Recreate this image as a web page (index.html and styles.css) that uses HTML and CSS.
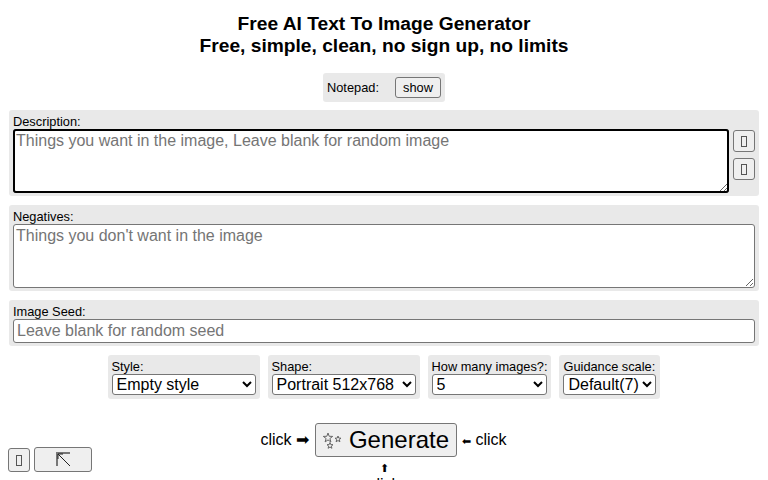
FILE: index.html
```html
<!DOCTYPE html>
<html lang="en">
<head>
    <meta charset="UTF-8">
    <meta name="viewport" content="width=device-width, initial-scale=1.0">
    <title>Free AI Text To Image Generator</title>
    <link rel="stylesheet" href="styles.css">
</head>
<body>
    <h1 class="title">Free AI Text To Image Generator<br>Free, simple, clean, no sign up, no limits</h1>

    <div class="notepad-row">
        <div class="panel notepad">
            <span>Notepad:</span>
            <button class="show-btn">show</button>
        </div>
    </div>

    <div class="panel field with-side">
        <div class="field-main">
            <label>Description:</label>
            <textarea class="text-box focused" placeholder="Things you want in the image, Leave blank for random image"></textarea>
        </div>
        <div class="side-btns">
            <button class="icon-btn"><span class="tofu"></span></button>
            <button class="icon-btn"><span class="tofu"></span></button>
        </div>
    </div>

    <div class="panel field">
        <label>Negatives:</label>
        <textarea class="text-box" placeholder="Things you don't want in the image"></textarea>
    </div>

    <div class="panel field">
        <label>Image Seed:</label>
        <input class="seed" type="text" placeholder="Leave blank for random seed">
    </div>

    <div class="options">
        <div class="panel option">
            <label>Style:</label>
            <select class="style-select"><option>Empty style</option></select>
        </div>
        <div class="panel option">
            <label>Shape:</label>
            <select class="shape-select"><option>Portrait 512x768</option></select>
        </div>
        <div class="panel option">
            <label>How many images?:</label>
            <select class="count-select"><option>5</option></select>
        </div>
        <div class="panel option">
            <label>Guidance scale:</label>
            <select class="guidance-select"><option>Default(7)</option></select>
        </div>
    </div>

    <div class="generate-row">
        <span class="hint">click &#x27A1;</span>
        <button class="generate">
            <svg class="stars" width="20" height="20" viewBox="0 0 20 20">
                <polygon points="5,3 6.2,6.3 9.7,6.4 6.9,8.5 7.9,11.9 5,9.9 2.1,11.9 3.1,8.5 0.3,6.4 3.8,6.3"/>
                <polygon points="15,6 15.8,8.1 18,8.2 16.3,9.6 16.9,11.8 15,10.5 13.1,11.8 13.7,9.6 12,8.2 14.2,8.1"/>
                <polygon points="7,12.5 7.8,14.6 10,14.7 8.3,16.1 8.9,18.3 7,17 5.1,18.3 5.7,16.1 4,14.7 6.2,14.6"/>
            </svg>
            Generate
        </button>
        <span class="hint hint-right"><span class="small-arrow">&#x2B05;</span> click</span>
    </div>
    <div class="below-hint">
        <div class="small-arrow">&#x2B06;</div>
        <div>click</div>
    </div>

    <!-- corner buttons -->
    <div class="corner-btns">
        <button class="icon-btn corner-small"><span class="tofu"></span></button>
        <button class="icon-btn corner-wide">
            <svg width="15" height="15" viewBox="0 0 15 15">
                <path class="corner-line" d="M1 14V1H14"/>
                <path class="corner-arrow" d="M2 2L14 14M2 2V7M2 2H7"/>
            </svg>
        </button>
    </div>
</body>
</html>
```

FILE: styles.css
```css
html, body { height: 480px; overflow: hidden; }
body { font-family: "Liberation Sans", Arial, sans-serif; margin: 8px; font-size: 12.8px; color: #000; position: relative; }
.title { font-size: 19.2px; line-height: 22px; margin: 5px 0 16px; text-align: center; font-weight: bold; }
.panel { background: #e9e9e9; border-radius: 3px; }

.notepad-row { display: flex; justify-content: center; margin-bottom: 8px; }
.notepad { display: flex; align-items: center; justify-content: space-between; padding: 4px; width: 122px; height: 29px; box-sizing: border-box; }
.show-btn { font: 12.8px "Liberation Sans", Arial, sans-serif; padding: 0; width: 46px; height: 21px; background: #efefef; border: 1px solid #767676; border-radius: 3px; }

.field { margin: 0 0 9px 1px; padding: 4px 4px 3px; width: 742px; }
.field label, .option label { display: block; line-height: 15px; }
.with-side { display: flex; }
.field-main { flex: 1; }
.side-btns { display: flex; flex-direction: column; gap: 6px; margin: 16px 0 0 4px; }

.text-box { display: block; box-sizing: border-box; width: 100%; height: 64px; margin: 0; padding: 2px; font: 16px "Liberation Sans", Arial, sans-serif; border: 1px solid #767676; border-radius: 3px; background: #fff; }
.with-side .text-box { width: 716px; }
.focused { outline: 2px solid #000; outline-offset: -2px; border-radius: 3px; }
.seed { display: block; box-sizing: border-box; width: 100%; height: 24px; margin: 0; padding: 1px 3px; font: 16px "Liberation Sans", Arial, sans-serif; border: 1px solid #767676; border-radius: 3px; background: #fff; }

.icon-btn { display: flex; align-items: center; justify-content: center; width: 22px; height: 22px; padding: 0; background: #efefef; border: 1px solid #767676; border-radius: 3px; }
.tofu { display: block; box-sizing: border-box; width: 6px; height: 11px; border: 1px solid #555; }

.options { display: flex; justify-content: center; gap: 8px; }
.option { padding: 4px; height: 44px; box-sizing: border-box; }
.option select { display: block; height: 21px; font: 16px "Liberation Sans", Arial, sans-serif; background: #fff; border: 1px solid #767676; border-radius: 3px; padding: 0; }
.style-select { width: 144px; }
.shape-select { width: 144px; }
.count-select { width: 115px; }
.guidance-select { width: 93px; }

.generate-row { display: flex; justify-content: center; align-items: center; gap: 6px; margin-top: 24px; font-size: 16px; height: 34px; }
.hint { line-height: 18px; height: 18px; margin-top: -1px; }
.hint-right { margin-left: -1px; margin-right: 1px; }
.generate { display: flex; align-items: center; gap: 6px; height: 34px; padding: 0 7px; font: 24px "Liberation Sans", Arial, sans-serif; background: #efefef; border: 1px solid #767676; border-radius: 3px; color: #000; }
.stars polygon { fill: none; stroke: #666; stroke-width: 1; }
.small-arrow { font-size: 11px; }
.below-hint { text-align: center; font-size: 16px; line-height: 18px; margin-top: 4px; }
.below-hint .small-arrow { line-height: 15px; }

.corner-btns { position: absolute; left: 0; top: 439px; display: flex; align-items: flex-end; gap: 4px; }
.corner-small { height: 24px; }
.corner-wide { width: 58px; height: 25px; }
.corner-line { fill: none; stroke: #777; stroke-width: 2; }
.corner-arrow { fill: none; stroke: #222; stroke-width: 1; }
```
